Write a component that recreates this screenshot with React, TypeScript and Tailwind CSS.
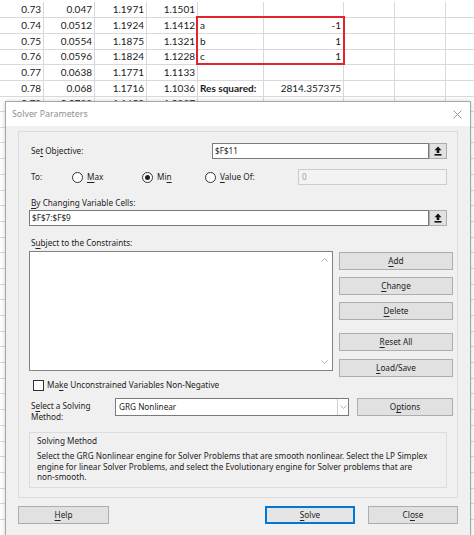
import React from 'react';

const data: string[][] = [
  ['0.73', '0.047', '1.1971', '1.1501', '', ''],
  ['0.74', '0.0512', '1.1924', '1.1412', 'a', '-1'],
  ['0.75', '0.0554', '1.1875', '1.1321', 'b', '1'],
  ['0.76', '0.0596', '1.1824', '1.1228', 'c', '1'],
  ['0.77', '0.0638', '1.1771', '1.1133', '', ''],
  ['0.78', '0.068', '1.1716', '1.1036', 'Res squared:', '2814.357375'],
  ['0.79', '0.0722', '1.1659', '1.0937', '', ''],
];

function U({ children }: { children: React.ReactNode }) {
  return <span className="underline underline-offset-[1.5px] decoration-[0.8px]">{children}</span>;
}

function Btn({ children, className = '' }: { children: React.ReactNode; className?: string }) {
  return (
    <div className={`h-[18px] bg-[#e1e1e1] border border-[#adadad] flex items-center justify-center text-[#222] ${className}`}>
      {children}
    </div>
  );
}

function CollapseBtn() {
  return (
    <div className="w-[18px] h-[16px] bg-[#e1e1e1] border border-[#adadad] flex items-center justify-center shrink-0">
      <svg width="8" height="10" viewBox="0 0 8 10">
        <path d="M4 0.5 L7.5 4.2 H5.3 V7 H2.7 V4.2 H0.5 Z" fill="#111" />
        <rect x="0.5" y="8" width="7" height="1.6" fill="#111" />
      </svg>
    </div>
  );
}

function Radio({ checked }: { checked?: boolean }) {
  return (
    <span className="w-[11px] h-[11px] rounded-full border border-[#333] bg-white flex items-center justify-center shrink-0">
      {checked && <span className="w-[5px] h-[5px] rounded-full bg-[#222]" />}
    </span>
  );
}

function Chevron({ up }: { up?: boolean }) {
  return (
    <svg width="7" height="4" viewBox="0 0 7 4">
      <path d={up ? 'M0.5 3.5 L3.5 0.5 L6.5 3.5' : 'M0.5 0.5 L3.5 3.5 L6.5 0.5'} fill="none" stroke="#a8a8a8" strokeWidth="0.9" />
    </svg>
  );
}

function Grid({ withText }: { withText: boolean }) {
  const rows: string[][] = [];
  for (let i = 0; i < 35; i++) rows.push((withText && data[i]) || ['', '', '', '', '', '']);
  return (
    <div className="pt-[2.3px] font-['Lato',sans-serif] text-[10px] text-[#1a1a1a]">
      {rows.map((r, i) => (
        <div key={i} className="grid grid-cols-[44px_51px_52px_51px_66px_80px_51px_51px_40px] h-[15.7px]">
          <div className="border-r border-b border-[#d9d9d9] flex items-center justify-end pr-[2px]">{r[0]}</div>
          <div className="border-r border-b border-[#d9d9d9] flex items-center justify-end pr-[2px]">{r[1]}</div>
          <div className="border-r border-b border-[#d9d9d9] flex items-center justify-end pr-[2px]">{r[2]}</div>
          <div className="border-r border-b border-[#d9d9d9] flex items-center justify-end pr-[2px]">{r[3]}</div>
          <div className={`border-r border-b border-[#d9d9d9] flex items-center pl-[2px] whitespace-nowrap ${r[4] === 'Res squared:' ? 'font-bold' : ''}`}>{r[4]}</div>
          <div className="border-r border-b border-[#d9d9d9] flex items-center justify-end pr-[2px]">{r[5]}</div>
          <div className="border-r border-b border-[#d9d9d9]" />
          <div className="border-r border-b border-[#d9d9d9]" />
          <div className="border-b border-[#d9d9d9]" />
        </div>
      ))}
    </div>
  );
}

export default function App() {
  return (
    <div className="relative w-[474px] h-[535px] overflow-hidden bg-white">
      {/* sheet: upper part with data, lower part (behind dialog) only grid lines */}
      <div className="h-[101px] overflow-hidden">
        <Grid withText />
      </div>
      <div className="h-[434px] overflow-hidden">
        <div className="-mt-[101px]">
          <Grid withText={false} />
        </div>
      </div>
      {/* selection box */}
      <div className="absolute left-[196px] top-[16px] w-[149px] h-[49px] border-2 border-[#e3242b]" />

      {/* Dialog window */}
      <div className="absolute left-[5px] top-[101px] w-[466px] h-[440px] border border-[#a6a6a6] bg-[#f0f0f0] shadow-[0_0_5px_rgba(0,0,0,0.18)] flex flex-col font-['Noto_Sans',sans-serif] text-[8.2px] text-[#222] leading-none">
        <div className="h-[24px] bg-white flex items-center justify-between pl-[6px] pr-[8px] shrink-0">
          <span className="text-[8.8px] text-[#8f8f8f]">Solver Parameters</span>
          <svg width="9" height="9" viewBox="0 0 9 9">
            <path d="M0.5 0.5 L8.5 8.5 M8.5 0.5 L0.5 8.5" stroke="#8a8a8a" strokeWidth="0.9" />
          </svg>
        </div>
        <div className="px-[12px] pt-[5px] flex flex-col">
          {/* inner panel */}
          <div className="w-[440px] h-[367px] border border-[#dcdcdc] px-[10px] flex flex-col">
            {/* Set Objective */}
            <div className="mt-[11px] h-[16px] flex items-center">
              <div className="w-[183px] pl-[2px]">Se<U>t</U> Objective:</div>
              <div className="w-[217px] h-[16px] bg-white border border-[#7a7a7a] flex items-center pl-[2px]">$F$11</div>
              <CollapseBtn />
            </div>
            {/* To */}
            <div className="mt-[10px] h-[16px] flex items-center">
              <div className="w-[43px] pl-[2px]">To:</div>
              <div className="w-[70px] flex items-center gap-[4px]">
                <Radio />
                <span><U>M</U>ax</span>
              </div>
              <div className="w-[63px] flex items-center gap-[4px]">
                <Radio checked />
                <span>Mi<U>n</U></span>
              </div>
              <div className="w-[93px] flex items-center gap-[4px]">
                <Radio />
                <span><U>V</U>alue Of:</span>
              </div>
              <div className="w-[149px] h-[16px] bg-[#f3f3f3] border border-[#cccccc] flex items-center pl-[3px] text-[#a0a0a0]">0</div>
            </div>
            {/* By changing */}
            <div className="mt-[11px] h-[14px] flex items-center pl-[2px]">
              <span><U>B</U>y Changing Variable Cells:</span>
            </div>
            <div className="h-[16px] flex items-center">
              <div className="w-[400px] h-[16px] bg-white border border-[#7a7a7a] flex items-center pl-[2px]">$F$7:$F$9</div>
              <CollapseBtn />
            </div>
            {/* Subject to */}
            <div className="mt-[10px] h-[14px] flex items-center pl-[2px]">
              <span>S<U>u</U>bject to the Constraints:</span>
            </div>
            <div className="mt-[1px] flex">
              <div className="w-[304px] h-[120px] bg-white border border-[#828282] flex justify-end shrink-0">
                <div className="w-[14px] mr-[1px] flex flex-col items-center justify-between pt-[6px] pb-[6px]">
                  <Chevron up />
                  <Chevron />
                </div>
              </div>
              <div className="ml-[6px] w-[114px] shrink-0 flex flex-col pt-[1px]">
                <Btn><U>A</U>dd</Btn>
                <Btn className="mt-[7px]"><U>C</U>hange</Btn>
                <Btn className="mt-[7px]"><U>D</U>elete</Btn>
                <Btn className="mt-[13px]"><U>R</U>eset All</Btn>
                <Btn className="mt-[8px]"><U>L</U>oad/Save</Btn>
              </div>
            </div>
            {/* checkbox */}
            <div className="h-[16px] flex items-center pl-[4px]">
              <span className="w-[11px] h-[11px] border border-[#333] bg-white shrink-0" />
              <span className="ml-[3px]">Ma<U>k</U>e Unconstrained Variables Non-Negative</span>
            </div>
            {/* select method */}
            <div className="mt-[5px] h-[18px] flex items-start">
              <div className="w-[86px] pl-[2px] mt-[2px] leading-[11px] shrink-0">
                S<U>e</U>lect a Solving<br />Method:
              </div>
              <div className="w-[234px] h-[18px] bg-white border border-[#7a7a7a] flex items-center shrink-0">
                <span className="flex-1 pl-[3px]">GRG Nonlinear</span>
                <div className="w-[11px] h-full border-l border-[#cfcfcf] flex items-center justify-center">
                  <Chevron />
                </div>
              </div>
              <Btn className="ml-[8px] w-[96px] shrink-0">O<U>p</U>tions</Btn>
            </div>
            {/* solving method group */}
            <div className="mt-[16px] h-[56px] border border-[#dcdcdc] pl-[7px] flex flex-col">
              <div className="mt-[2px] h-[12px] flex items-center">Solving Method</div>
              <div className="mt-[4px] leading-[10.5px] whitespace-nowrap">
                <div>Select the GRG Nonlinear engine for Solver Problems that are smooth nonlinear. Select the LP Simplex</div>
                <div>engine for linear Solver Problems, and select the Evolutionary engine for Solver problems that are</div>
                <div>non-smooth.</div>
              </div>
            </div>
          </div>
          {/* bottom buttons */}
          <div className="mt-[8px] flex items-center">
            <Btn className="w-[91px]"><U>H</U>elp</Btn>
            <div className="flex-1" />
            <Btn className="w-[90px] !border-[#0078d7] !border-2 !bg-[#e5e5e5]"><U>S</U>olve</Btn>
            <Btn className="w-[90px] ml-[13px]">Cl<U>o</U>se</Btn>
          </div>
        </div>
      </div>
    </div>
  );
}
